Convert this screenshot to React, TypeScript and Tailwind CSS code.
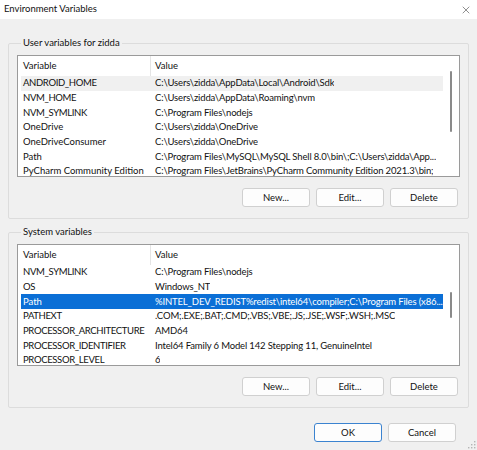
import { X } from "lucide-react"

type Row = { name: string; value: string; selected?: boolean; hover?: boolean }

const userVars: Row[] = [
    { name: "ANDROID_HOME", value: "C:\\Users\\zidda\\AppData\\Local\\Android\\Sdk", hover: true },
    { name: "NVM_HOME", value: "C:\\Users\\zidda\\AppData\\Roaming\\nvm" },
    { name: "NVM_SYMLINK", value: "C:\\Program Files\\nodejs" },
    { name: "OneDrive", value: "C:\\Users\\zidda\\OneDrive" },
    { name: "OneDriveConsumer", value: "C:\\Users\\zidda\\OneDrive" },
    { name: "Path", value: "C:\\Program Files\\MySQL\\MySQL Shell 8.0\\bin\\;C:\\Users\\zidda\\App..." },
    { name: "PyCharm Community Edition", value: "C:\\Program Files\\JetBrains\\PyCharm Community Edition 2021.3\\bin;" },
]

const systemVars: Row[] = [
    { name: "NVM_SYMLINK", value: "C:\\Program Files\\nodejs" },
    { name: "OS", value: "Windows_NT" },
    { name: "Path", value: "%INTEL_DEV_REDIST%redist\\intel64\\compiler;C:\\Program Files (x86...", selected: true },
    { name: "PATHEXT", value: ".COM;.EXE;.BAT;.CMD;.VBS;.VBE;.JS;.JSE;.WSF;.WSH;.MSC" },
    { name: "PROCESSOR_ARCHITECTURE", value: "AMD64" },
    { name: "PROCESSOR_IDENTIFIER", value: "Intel64 Family 6 Model 142 Stepping 11, GenuineIntel" },
    { name: "PROCESSOR_LEVEL", value: "6" },
]

// Segoe UI has narrow capitals, so all-caps names get tighter tracking
const isCaps = (s: string) => s === s.toUpperCase()

function WinButton({ label, primary }: { label: string; primary?: boolean }) {
    return (
        <button
            className={
                primary
                    ? "w-[68px] h-[19px] rounded-[3px] border border-[#3b83d0] bg-[#fdfdfd] text-[9.5px] text-[#111] leading-none"
                    : "w-[68px] h-[19px] rounded-[3px] border border-[#d0d0d0] bg-[#fdfdfd] text-[9.5px] text-[#111] leading-none"
            }
        >
            {label}
        </button>
    )
}

function VarList({ rows, thumbTop, thumbHeight }: { rows: Row[]; thumbTop: string; thumbHeight: string }) {
    return (
        <div className="flex h-[122px] border border-[#9a9a9a] bg-white overflow-hidden">
            <div className="flex-1 flex flex-col pl-[3px] min-w-0">
                {/* Header */}
                <div className="flex h-[20px] shrink-0 items-center text-[#111]">
                    <div className="w-[130px] h-full flex items-center pl-[2px] border-r border-[#e5e5e5]">Variable</div>
                    <div className="pl-[4px]">Value</div>
                </div>
                {rows.map((r) => (
                    <div
                        key={r.name}
                        className={
                            r.selected
                                ? "flex h-[14.7px] shrink-0 items-center bg-[#0b6fd6] text-white whitespace-nowrap"
                                : r.hover
                                ? "flex h-[14.7px] shrink-0 items-center bg-[#f0f0f0] text-[#111] whitespace-nowrap"
                                : "flex h-[14.7px] shrink-0 items-center text-[#111] whitespace-nowrap"
                        }
                    >
                        <div
                            className={
                                isCaps(r.name)
                                    ? "w-[130px] pl-[2px] shrink-0 overflow-hidden tracking-[-0.35px]"
                                    : "w-[130px] pl-[2px] shrink-0 overflow-hidden"
                            }
                        >
                            {r.name}
                        </div>
                        <div className="pl-[4px] min-w-0 overflow-hidden tracking-[-0.15px]">{r.value}</div>
                    </div>
                ))}
            </div>
            {/* Scrollbar track */}
            <div className="w-[16px] shrink-0 flex justify-center">
                <div className={`w-[2px] rounded-full bg-[#8a8a8a] ${thumbTop} ${thumbHeight}`} />
            </div>
        </div>
    )
}

function Group({ title, children }: { title: string; children: React.ReactNode }) {
    return (
        <fieldset className="min-w-0 mx-[8px] border border-[#dcdcdc] rounded-[2px] px-[8px] pb-[11px]">
            <legend className="ml-[4px] px-[2px] text-[#111] leading-[16px]">{title}</legend>
            <div className="mt-[4px]">{children}</div>
        </fieldset>
    )
}

function SizeGrip() {
    const dots = [
        [6, 1],
        [6, 4],
        [3, 4],
        [6, 7],
        [3, 7],
        [0, 7],
    ]
    return (
        <svg width="8" height="9" viewBox="0 0 8 9" className="absolute right-[1px] bottom-[1px]">
            {dots.map(([x, y]) => (
                <rect key={`${x}-${y}`} x={x} y={y} width="1.4" height="1.4" fill="#b5b5b5" />
            ))}
        </svg>
    )
}

export default function App() {
    return (
        <div
            className="relative w-[477px] h-[450px] bg-[#f0f0f0] text-[9.5px] flex flex-col overflow-hidden"
            style={{ fontFamily: 'Lato, "Noto Sans", sans-serif' }}
        >
            {/* Title bar */}
            <div className="h-[19px] bg-white flex items-center justify-between pl-[4px] pr-[5px] shrink-0">
                <span className="text-[9.5px] text-[#111]">Environment Variables</span>
                <X size={12} strokeWidth={1.1} className="text-[#333]" />
            </div>

            <div className="mt-[16px]">
                <Group title="User variables for zidda">
                    <VarList rows={userVars} thumbTop="mt-[15px]" thumbHeight="h-[61px]" />
                    <div className="flex justify-end gap-[6px] mt-[11px] pr-[2px]">
                        <WinButton label="New..." />
                        <WinButton label="Edit..." />
                        <WinButton label="Delete" />
                    </div>
                </Group>
            </div>

            <div className="mt-[5px]">
                <Group title="System variables">
                    <VarList rows={systemVars} thumbTop="mt-[47px]" thumbHeight="h-[26px]" />
                    <div className="flex justify-end gap-[6px] mt-[11px] pr-[2px]">
                        <WinButton label="New..." />
                        <WinButton label="Edit..." />
                        <WinButton label="Delete" />
                    </div>
                </Group>
            </div>

            <div className="flex justify-end gap-[6px] mt-[15px] pr-[21px]">
                <WinButton label="OK" primary />
                <WinButton label="Cancel" />
            </div>

            <SizeGrip />
        </div>
    )
}
